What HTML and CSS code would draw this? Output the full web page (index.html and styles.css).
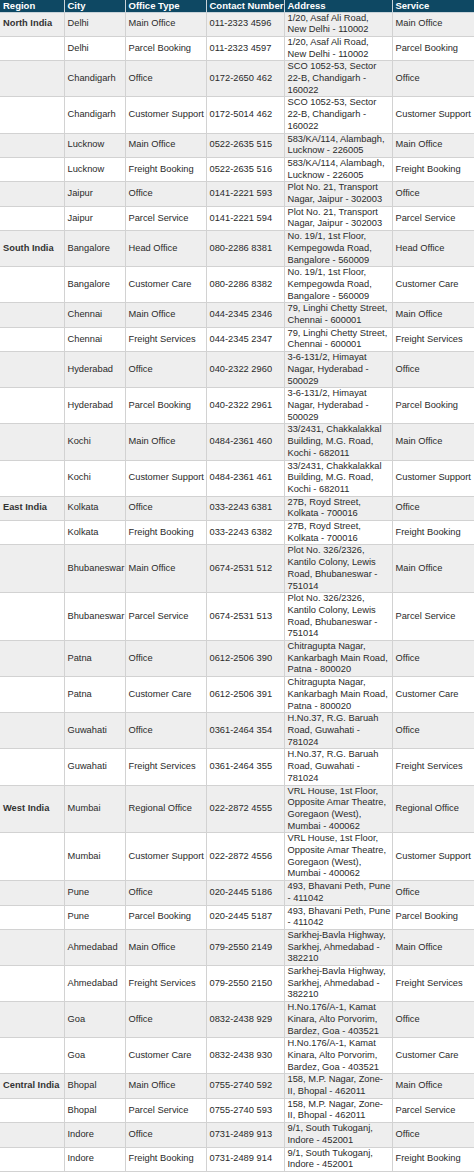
FILE: index.html
```html
<!DOCTYPE html>
<html>
<head>
<meta charset="utf-8">
<title>Office Directory</title>
<link rel="stylesheet" href="styles.css">
</head>
<body>
<table class="dir">
<colgroup>
<col class="c-region"><col class="c-city"><col class="c-type"><col class="c-phone"><col class="c-addr"><col class="c-svc">
</colgroup>
<thead>
<tr><th>Region</th><th>City</th><th>Office Type</th><th>Contact Number</th><th>Address</th><th>Service</th></tr>
</thead>
<tbody>
<tr><td class="reg">North India</td><td>Delhi</td><td>Main Office</td><td>011-2323 4596</td><td>1/20, Asaf Ali Road,<br>New Delhi - 110002</td><td>Main Office</td></tr>
<tr><td class="reg"></td><td>Delhi</td><td>Parcel Booking</td><td>011-2323 4597</td><td>1/20, Asaf Ali Road,<br>New Delhi - 110002</td><td>Parcel Booking</td></tr>
<tr><td class="reg"></td><td>Chandigarh</td><td>Office</td><td>0172-2650 462</td><td>SCO 1052-53, Sector<br>22-B, Chandigarh -<br>160022</td><td>Office</td></tr>
<tr><td class="reg"></td><td>Chandigarh</td><td>Customer Support</td><td>0172-5014 462</td><td>SCO 1052-53, Sector<br>22-B, Chandigarh -<br>160022</td><td>Customer Support</td></tr>
<tr><td class="reg"></td><td>Lucknow</td><td>Main Office</td><td>0522-2635 515</td><td>583/KA/114, Alambagh,<br>Lucknow - 226005</td><td>Main Office</td></tr>
<tr><td class="reg"></td><td>Lucknow</td><td>Freight Booking</td><td>0522-2635 516</td><td>583/KA/114, Alambagh,<br>Lucknow - 226005</td><td>Freight Booking</td></tr>
<tr><td class="reg"></td><td>Jaipur</td><td>Office</td><td>0141-2221 593</td><td>Plot No. 21, Transport<br>Nagar, Jaipur - 302003</td><td>Office</td></tr>
<tr><td class="reg"></td><td>Jaipur</td><td>Parcel Service</td><td>0141-2221 594</td><td>Plot No. 21, Transport<br>Nagar, Jaipur - 302003</td><td>Parcel Service</td></tr>

<tr><td class="reg">South India</td><td>Bangalore</td><td>Head Office</td><td>080-2286 8381</td><td>No. 19/1, 1st Floor,<br>Kempegowda Road,<br>Bangalore - 560009</td><td>Head Office</td></tr>
<tr><td class="reg"></td><td>Bangalore</td><td>Customer Care</td><td>080-2286 8382</td><td>No. 19/1, 1st Floor,<br>Kempegowda Road,<br>Bangalore - 560009</td><td>Customer Care</td></tr>
<tr><td class="reg"></td><td>Chennai</td><td>Main Office</td><td>044-2345 2346</td><td>79, Linghi Chetty Street,<br>Chennai - 600001</td><td>Main Office</td></tr>
<tr><td class="reg"></td><td>Chennai</td><td>Freight Services</td><td>044-2345 2347</td><td>79, Linghi Chetty Street,<br>Chennai - 600001</td><td>Freight Services</td></tr>
<tr><td class="reg"></td><td>Hyderabad</td><td>Office</td><td>040-2322 2960</td><td>3-6-131/2, Himayat<br>Nagar, Hyderabad -<br>500029</td><td>Office</td></tr>
<tr><td class="reg"></td><td>Hyderabad</td><td>Parcel Booking</td><td>040-2322 2961</td><td>3-6-131/2, Himayat<br>Nagar, Hyderabad -<br>500029</td><td>Parcel Booking</td></tr>
<tr><td class="reg"></td><td>Kochi</td><td>Main Office</td><td>0484-2361 460</td><td>33/2431, Chakkalakkal<br>Building, M.G. Road,<br>Kochi - 682011</td><td>Main Office</td></tr>
<tr><td class="reg"></td><td>Kochi</td><td>Customer Support</td><td>0484-2361 461</td><td>33/2431, Chakkalakkal<br>Building, M.G. Road,<br>Kochi - 682011</td><td>Customer Support</td></tr>

<tr><td class="reg">East India</td><td>Kolkata</td><td>Office</td><td>033-2243 6381</td><td>27B, Royd Street,<br>Kolkata - 700016</td><td>Office</td></tr>
<tr><td class="reg"></td><td>Kolkata</td><td>Freight Booking</td><td>033-2243 6382</td><td>27B, Royd Street,<br>Kolkata - 700016</td><td>Freight Booking</td></tr>
<tr><td class="reg"></td><td>Bhubaneswar</td><td>Main Office</td><td>0674-2531 512</td><td>Plot No. 326/2326,<br>Kantilo Colony, Lewis<br>Road, Bhubaneswar -<br>751014</td><td>Main Office</td></tr>
<tr><td class="reg"></td><td>Bhubaneswar</td><td>Parcel Service</td><td>0674-2531 513</td><td>Plot No. 326/2326,<br>Kantilo Colony, Lewis<br>Road, Bhubaneswar -<br>751014</td><td>Parcel Service</td></tr>
<tr><td class="reg"></td><td>Patna</td><td>Office</td><td>0612-2506 390</td><td>Chitragupta Nagar,<br>Kankarbagh Main Road,<br>Patna - 800020</td><td>Office</td></tr>
<tr><td class="reg"></td><td>Patna</td><td>Customer Care</td><td>0612-2506 391</td><td>Chitragupta Nagar,<br>Kankarbagh Main Road,<br>Patna - 800020</td><td>Customer Care</td></tr>
<tr><td class="reg"></td><td>Guwahati</td><td>Office</td><td>0361-2464 354</td><td>H.No.37, R.G. Baruah<br>Road, Guwahati -<br>781024</td><td>Office</td></tr>
<tr><td class="reg"></td><td>Guwahati</td><td>Freight Services</td><td>0361-2464 355</td><td>H.No.37, R.G. Baruah<br>Road, Guwahati -<br>781024</td><td>Freight Services</td></tr>

<tr><td class="reg">West India</td><td>Mumbai</td><td>Regional Office</td><td>022-2872 4555</td><td>VRL House, 1st Floor,<br>Opposite Amar Theatre,<br>Goregaon (West),<br>Mumbai - 400062</td><td>Regional Office</td></tr>
<tr><td class="reg"></td><td>Mumbai</td><td>Customer Support</td><td>022-2872 4556</td><td>VRL House, 1st Floor,<br>Opposite Amar Theatre,<br>Goregaon (West),<br>Mumbai - 400062</td><td>Customer Support</td></tr>
<tr><td class="reg"></td><td>Pune</td><td>Office</td><td>020-2445 5186</td><td>493, Bhavani Peth, Pune<br>- 411042</td><td>Office</td></tr>
<tr><td class="reg"></td><td>Pune</td><td>Parcel Booking</td><td>020-2445 5187</td><td>493, Bhavani Peth, Pune<br>- 411042</td><td>Parcel Booking</td></tr>
<tr><td class="reg"></td><td>Ahmedabad</td><td>Main Office</td><td>079-2550 2149</td><td>Sarkhej-Bavla Highway,<br>Sarkhej, Ahmedabad -<br>382210</td><td>Main Office</td></tr>
<tr><td class="reg"></td><td>Ahmedabad</td><td>Freight Services</td><td>079-2550 2150</td><td>Sarkhej-Bavla Highway,<br>Sarkhej, Ahmedabad -<br>382210</td><td>Freight Services</td></tr>
<tr><td class="reg"></td><td>Goa</td><td>Office</td><td>0832-2438 929</td><td>H.No.176/A-1, Kamat<br>Kinara, Alto Porvorim,<br>Bardez, Goa - 403521</td><td>Office</td></tr>
<tr><td class="reg"></td><td>Goa</td><td>Customer Care</td><td>0832-2438 930</td><td>H.No.176/A-1, Kamat<br>Kinara, Alto Porvorim,<br>Bardez, Goa - 403521</td><td>Customer Care</td></tr>

<tr><td class="reg">Central India</td><td>Bhopal</td><td>Main Office</td><td>0755-2740 592</td><td>158, M.P. Nagar, Zone-<br>II, Bhopal - 462011</td><td>Main Office</td></tr>
<tr><td class="reg"></td><td>Bhopal</td><td>Parcel Service</td><td>0755-2740 593</td><td>158, M.P. Nagar, Zone-<br>II, Bhopal - 462011</td><td>Parcel Service</td></tr>
<tr><td class="reg"></td><td>Indore</td><td>Office</td><td>0731-2489 913</td><td>9/1, South Tukoganj,<br>Indore - 452001</td><td>Office</td></tr>
<tr><td class="reg"></td><td>Indore</td><td>Freight Booking</td><td>0731-2489 914</td><td>9/1, South Tukoganj,<br>Indore - 452001</td><td>Freight Booking</td></tr>
</tbody>
</table>
</body>
</html>
```

FILE: styles.css
```css
html, body {
  margin: 0;
  padding: 0;
  background: #ffffff;
}

.dir {
  width: 474px;
  table-layout: fixed;
  border-collapse: collapse;
  font-family: "Liberation Sans", Arial, sans-serif;
  font-size: 9.3px;
  line-height: 11.7px;
  color: #2a2a2a;
}

.c-region { width: 64px; }
.c-city { width: 61px; }
.c-type { width: 81px; }
.c-phone { width: 78px; }
.c-addr { width: 108px; }
.c-svc { width: 82px; }

.dir th {
  background: #0e4863;
  color: #ffffff;
  font-weight: bold;
  font-size: 9.5px;
  text-align: left;
  line-height: 11.5px;
  padding: 0 2px 0 3px;
  border-left: 1px solid #c9d3d9;
  border-bottom: 1px solid #c9d3d9;
  white-space: nowrap;
  overflow: hidden;
}

.dir th:first-child {
  border-left: none;
}

.dir td {
  padding: 0 2px 0 3px;
  border: 1px solid #d2d2d2;
  vertical-align: middle;
  white-space: nowrap;
}

.dir td:first-child {
  border-left: none;
}

.dir td:last-child {
  border-right: none;
}

.dir tbody tr:nth-child(odd) td {
  background: #eeeeee;
}

.dir .reg {
  font-weight: bold;
  color: #333333;
}
```
